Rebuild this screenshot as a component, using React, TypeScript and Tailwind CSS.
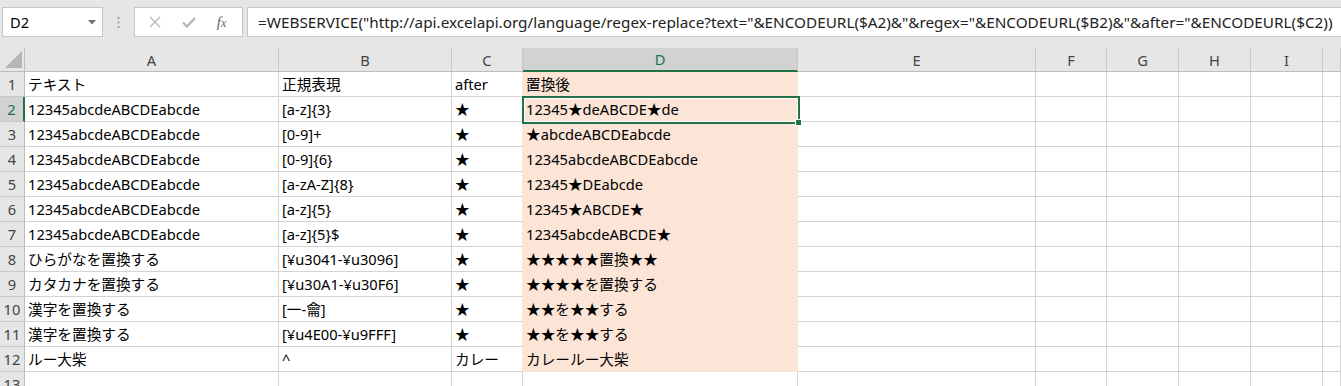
import React from 'react';

const FORMULA =
  '=WEBSERVICE("http://api.excelapi.org/language/regex-replace?text="&ENCODEURL($A2)&"&regex="&ENCODEURL($B2)&"&after="&ENCODEURL($C2))';

const COLUMNS = ['A', 'B', 'C', 'D', 'E', 'F', 'G', 'H', 'I', ''];

const ROWS: string[][] = [
  ['テキスト', '正規表現', 'after', '置換後'],
  ['12345abcdeABCDEabcde', '[a-z]{3}', '★', '12345★deABCDE★de'],
  ['12345abcdeABCDEabcde', '[0-9]+', '★', '★abcdeABCDEabcde'],
  ['12345abcdeABCDEabcde', '[0-9]{6}', '★', '12345abcdeABCDEabcde'],
  ['12345abcdeABCDEabcde', '[a-zA-Z]{8}', '★', '12345★DEabcde'],
  ['12345abcdeABCDEabcde', '[a-z]{5}', '★', '12345★ABCDE★'],
  ['12345abcdeABCDEabcde', '[a-z]{5}$', '★', '12345abcdeABCDE★'],
  ['ひらがなを置換する', '[¥u3041-¥u3096]', '★', '★★★★★置換★★'],
  ['カタカナを置換する', '[¥u30A1-¥u30F6]', '★', '★★★★を置換する'],
  ['漢字を置換する', '[一-龠]', '★', '★★を★★する'],
  ['漢字を置換する', '[¥u4E00-¥u9FFF]', '★', '★★を★★する'],
  ['ルー大柴', '^', 'カレー', 'カレールー大柴'],
  [],
];

function Toolbar() {
  return (
    <div className="flex h-[48px] shrink-0 items-start pl-[2px] pt-[7px]">
      {/* Name box */}
      <div className="flex h-[30px] w-[101px] items-center justify-between border border-[#c6c6c6] bg-white pl-[7px] pr-[6px]">
        <span className="text-[14.67px] text-black">D2</span>
        <svg width="8" height="5" viewBox="0 0 8 5">
          <path d="M0 0H8L4 4.5Z" fill="#707070" />
        </svg>
      </div>

      <div className="flex h-[30px] w-[31px] items-center justify-center">
        <svg width="3" height="11" viewBox="0 0 3 11">
          <rect x="0.5" y="0" width="2" height="2" fill="#a0a0a0" />
          <rect x="0.5" y="4.5" width="2" height="2" fill="#a0a0a0" />
          <rect x="0.5" y="9" width="2" height="2" fill="#a0a0a0" />
        </svg>
      </div>

      {/* Cancel / enter / fx */}
      <div className="flex h-[30px] w-[109px] items-center border border-[#c6c6c6] bg-white">
        <div className="flex w-[37px] justify-center pl-[3px]">
          <svg width="12" height="12" viewBox="0 0 12 12">
            <path d="M1 1L11 11M11 1L1 11" stroke="#b4b4b4" strokeWidth="1.3" fill="none" />
          </svg>
        </div>
        <div className="flex w-[33px] justify-center">
          <svg width="14" height="11" viewBox="0 0 14 11">
            <path d="M1 5.5L5 9.5L13 1" stroke="#b4b4b4" strokeWidth="2.2" fill="none" />
          </svg>
        </div>
        <div className="flex flex-1 justify-center pr-[4px]">
          <span className="font-['Liberation_Serif',serif] text-[15px] italic leading-none text-[#666666]">
            f<span className="text-[12px]">x</span>
          </span>
        </div>
      </div>

      {/* Formula input */}
      <div className="ml-[4px] flex h-[30px] flex-1 items-center overflow-hidden whitespace-nowrap border border-[#c6c6c6] border-r-0 bg-white pl-[10px]">
        <span className="text-[15.3px] text-[#222222]">{FORMULA}</span>
      </div>
    </div>
  );
}

function HeaderRow() {
  return (
    <>
      <div className="flex h-[24px] items-end justify-end border-b border-r border-[#bdbdbd] bg-[#e6e6e6] pb-[3px] pr-[2px]">
        <svg width="17" height="17" viewBox="0 0 17 17">
          <path d="M17 0V17H0Z" fill="#b5b5b5" />
        </svg>
      </div>
      {COLUMNS.map((c, i) =>
        c === 'D' ? (
          <div
            key={i}
            className="flex h-[24px] items-center justify-center border-b-2 border-r border-b-[#217346] border-r-[#c8c8c8] bg-[#d2d2d2] text-[14.67px] text-[#217346]"
          >
            {c}
          </div>
        ) : (
          <div
            key={i}
            className="flex h-[24px] items-center justify-center border-b border-r border-b-[#bdbdbd] border-r-[#c8c8c8] bg-[#e6e6e6] text-[14.67px] text-[#444444]"
          >
            {c}
          </div>
        )
      )}
    </>
  );
}

function cellClass(col: number, row: number) {
  const base = 'flex h-[25px] items-center overflow-hidden whitespace-nowrap pl-[3px] text-[14.67px] text-black border-b border-r';
  const filled = row <= 12;
  if (col === 3 && filled) return `${base} bg-[#fce4d6] border-[#fce4d6]`;
  if (col === 2 && filled) return `${base} bg-white border-b-[#d4d4d4] border-r-[#fce4d6]`;
  return `${base} bg-white border-[#d4d4d4]`;
}

function SheetRow({ index, cells }: { index: number; cells: string[] }) {
  const selected = index === 2;
  return (
    <>
      <div
        className={
          selected
            ? 'flex h-[25px] items-center justify-center border-b border-r-2 border-b-[#c8c8c8] border-r-[#217346] bg-[#d2d2d2] text-[14.67px] text-[#217346]'
            : 'flex h-[25px] items-center justify-center border-b border-r border-b-[#c8c8c8] border-r-[#bdbdbd] bg-[#e6e6e6] text-[14.67px] text-[#444444]'
        }
      >
        {index}
      </div>
      {COLUMNS.map((_, ci) => (
        <div key={ci} className={cellClass(ci, index)}>
          {cells[ci] ?? ''}
        </div>
      ))}
    </>
  );
}

export default function App() {
  return (
    <div className="flex h-[386px] w-[1341px] flex-col overflow-hidden bg-[#e6e6e6] font-['Noto_Sans','Noto_Sans_CJK_JP',sans-serif]">
      <Toolbar />

      <div className="relative flex-1 overflow-hidden">
        <div className="grid grid-cols-[25px_254px_173px_71px_275px_238px_71px_72px_72px_72px_1fr]">
          <HeaderRow />
          {ROWS.map((cells, i) => (
            <SheetRow key={i} index={i + 1} cells={cells} />
          ))}
        </div>

        {/* Active cell D2 */}
        <div className="pointer-events-none absolute left-[522px] top-[48px] h-[28px] w-[278px] border-2 border-[#217346] shadow-[inset_0_0_0_1px_#ffffff]" />
        <div className="pointer-events-none absolute left-[795px] top-[71px] h-[7px] w-[7px] border border-white bg-[#217346]" />
      </div>
    </div>
  );
}
